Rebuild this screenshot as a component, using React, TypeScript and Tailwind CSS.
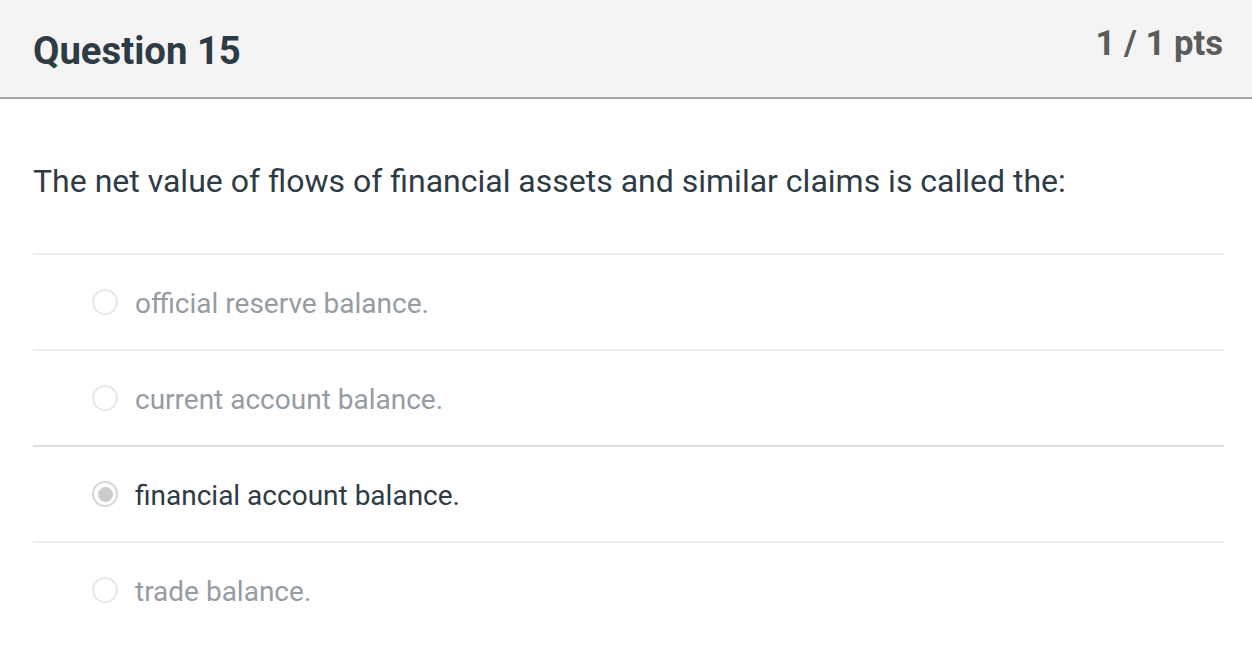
import React from "react";

const answers = [
  { text: "official reserve balance.", selected: false },
  { text: "current account balance.", selected: false },
  { text: "financial account balance.", selected: true },
  { text: "trade balance.", selected: false },
];

export default function App() {
  return (
    <div className="w-[1252px] h-[657px] overflow-hidden bg-white" style={{ fontFamily: "Roboto, 'Liberation Sans', sans-serif" }}>
      <div className="h-[99px] bg-[#f4f4f4] border-b-2 border-[#a8a8a8] flex justify-between pl-[33px] pr-[29px]">
        <div className="pt-[28px] text-[38.3px] leading-[46px] font-bold text-[#2d3b45]">Question 15</div>
        <div className="pt-[21px] text-[34.7px] leading-[44px] font-bold text-[#5b5b5b]">1 / 1 pts</div>
      </div>
      <div className="pl-[33px] pr-[28px]">
        <div className="pt-[55px] pb-[45px] text-[32px] leading-[54px] text-[#2d3b45]">
          The net value of flows of financial assets and similar claims is called the:
        </div>
        {answers.map((a, i) => (
          <div
            key={i}
            className={`h-[96px] border-t-2 flex items-center pl-[59px] gap-[17px] ${i === 2 ? "border-[#dedede]" : "border-[#eeeeee]"}`}
          >
            {a.selected ? (
              <div className="w-[26px] h-[26px] rounded-full border-2 border-[#d6d6d6] bg-white flex items-center justify-center">
                <div className="w-[15px] h-[15px] rounded-full bg-[#cccccc]" />
              </div>
            ) : (
              <div className="w-[26px] h-[26px] rounded-full border-2 border-[#e8e8e8] bg-white" />
            )}
            <div className={`pt-[3px] text-[28px] leading-[32px] ${a.selected ? "text-[#2d3b45]" : "text-[#959ca3]"}`}>{a.text}</div>
          </div>
        ))}
      </div>
    </div>
  );
}
